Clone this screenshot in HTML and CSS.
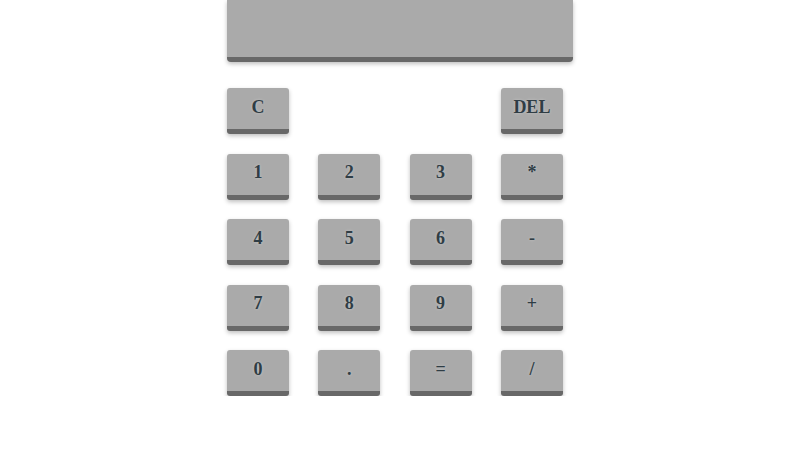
FILE: index.html
```html
<!DOCTYPE html>
<html lang="en">
<head>
  <meta charset="UTF-8" />
  <title>Calculator</title>
  <link rel="stylesheet" href="styles.css">
</head>
<body>
  <div class="calculator">
    <div class="display" id="display"></div>

    <div class="keys">
      <button class="key" data-action="clear">C</button>
      <span></span>
      <span></span>
      <button class="key" data-action="del">DEL</button>

      <button class="key">1</button>
      <button class="key">2</button>
      <button class="key">3</button>
      <button class="key">*</button>

      <button class="key">4</button>
      <button class="key">5</button>
      <button class="key">6</button>
      <button class="key">-</button>

      <button class="key">7</button>
      <button class="key">8</button>
      <button class="key">9</button>
      <button class="key">+</button>

      <button class="key">0</button>
      <button class="key">.</button>
      <button class="key" data-action="equals">=</button>
      <button class="key">/</button>
    </div>
  </div>
</body>
</html>
```
FILE: styles.css
```css
body {
    margin: 0;
    background-color: #ffffff;
    font-family: "Liberation Serif", "Times New Roman", serif;
}

.calculator {
    width: 346px;
    margin: 0 auto;
}

.display {
    height: 57px;
    background-color: #aaaaaa;
    border-bottom: 5px solid #686868;
    border-radius: 0 0 4px 4px;
    box-shadow: 0 2px 4px rgba(0,0,0,0.25);
}

.keys {
    display: grid;
    grid-template-columns: repeat(4, 62px);
    grid-auto-rows: 46px;
    column-gap: 29.3px;
    row-gap: 19.5px;
    margin-top: 26px;
}

.key {
    background-color: #aaaaaa;
    color: #2f3d45;
    border: none;
    border-bottom: 5px solid #686868;
    border-radius: 3px;
    box-shadow: 0 2px 4px rgba(0,0,0,0.25);
    font-family: inherit;
    font-size: 18px;
    font-weight: bold;
    text-shadow: 0 0 3px rgba(255,255,255,0.35);
    padding: 0 0 3px;
    cursor: pointer;
}

.key:hover {
    background-color: #b5b5b5;
}
```
